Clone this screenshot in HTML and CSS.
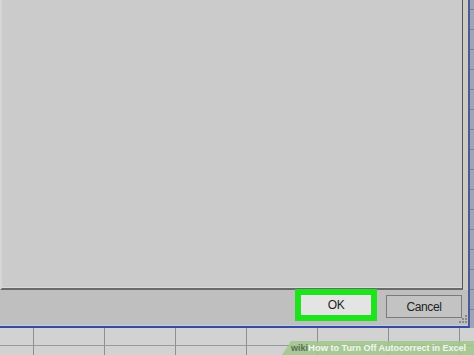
FILE: index.html
```html
<!DOCTYPE html>
<html lang="en">
<head>
    <meta charset="UTF-8">
    <meta name="viewport" content="width=device-width, initial-scale=1.0">
    <title>How to Turn Off Autocorrect in Excel</title>
    <link rel="stylesheet" href="styles.css">
</head>
<body>
    <div class="screen">
        <div class="top">
            <div class="dialog">
                <div class="panel-wrap">
                    <div class="panel"></div>
                </div>
                <div class="button-bar">
                    <div class="highlight">
                        <button class="btn btn-ok">OK</button>
                    </div>
                    <button class="btn btn-cancel">Cancel</button>
                    <svg class="grip" width="8" height="8" viewBox="0 0 8 8">
                        <rect x="6" y="0" width="2" height="2" fill="#8a8a8a"/>
                        <rect x="3" y="3" width="2" height="2" fill="#8a8a8a"/>
                        <rect x="6" y="3" width="2" height="2" fill="#8a8a8a"/>
                        <rect x="0" y="6" width="2" height="2" fill="#8a8a8a"/>
                        <rect x="3" y="6" width="2" height="2" fill="#8a8a8a"/>
                        <rect x="6" y="6" width="2" height="2" fill="#8a8a8a"/>
                    </svg>
                </div>
            </div>
            <div class="sheet-edge"></div>
        </div>
        <div class="grid">
            <div class="row">
                <div class="cell first"></div>
                <div class="cell"></div>
                <div class="cell"></div>
                <div class="cell"></div>
                <div class="cell"></div>
                <div class="cell"></div>
                <div class="cell"></div>
            </div>
            <div class="row">
                <div class="cell first"></div>
                <div class="cell"></div>
                <div class="cell"></div>
                <div class="cell"></div>
                <div class="cell"></div>
                <div class="cell"></div>
                <div class="cell"></div>
            </div>
        </div>
        <div class="watermark">
            <span class="wiki">wiki</span><span class="how">How</span> to Turn Off Autocorrect in Excel
        </div>
    </div>
</body>
</html>
```

FILE: styles.css
```css
body {
    margin: 0;
    font-family: "Liberation Sans", Arial, sans-serif;
    background-color: #d2d2d2;
}
.screen {
    position: relative;
    width: 474px;
    height: 355px;
    overflow: hidden;
}
.top {
    display: flex;
}
.dialog {
    position: relative;
    width: 468px;
    background-color: #bfbfbf;
    border-right: 2px solid #4b5a98;
    border-bottom: 2px solid #3a4aa0;
    box-shadow: inset 0 -1px 0 #b6d2e2;
}
.panel-wrap {
    padding-right: 5px;
    background-color: #cdcac2;
}
.panel {
    height: 288px;
    background-color: #cbcbcb;
    border-left: 2px solid #d6d6d6;
    border-right: 1px solid #555;
    border-bottom: 2px solid #6a6a6a;
    box-shadow: inset 0 -1px 0 #dadada;
}
.button-bar {
    display: flex;
    justify-content: flex-end;
    align-items: flex-start;
    gap: 9px;
    height: 36px;
    padding-right: 6px;
}
.highlight {
    margin-top: -1px;
    border: 6px solid #1ee41e;
    width: 70px;
    height: 20px;
}
.btn {
    font-family: "Liberation Sans", Arial, sans-serif;
    font-size: 12px;
    letter-spacing: -0.4px;
    color: #1e1e1e;
    padding: 0;
    cursor: pointer;
}
.btn-ok {
    display: block;
    width: 100%;
    height: 100%;
    border: none;
    background-color: #e4e4e4;
}
.btn-cancel {
    margin-top: 5px;
    width: 76px;
    height: 23px;
    border: 1px solid #7a7a7a;
    background-color: #c3c3c3;
}
.grip {
    position: absolute;
    right: 1px;
    bottom: 3px;
}
.sheet-edge {
    width: 4px;
    background-color: #9fa5b6;
    background-image: repeating-linear-gradient(to bottom, transparent 0, transparent 9px, #7c8296 9px, #7c8296 10px, transparent 10px, transparent 20px);
}
.grid {
    display: flex;
    flex-direction: column;
}
.row {
    display: flex;
    height: 17px;
    border-bottom: 1px solid #9a9a9a;
}
.cell {
    width: 70px;
    flex-shrink: 0;
    border-right: 1px solid #8f8f8f;
}
.cell.first {
    width: 33px;
}
.watermark {
    position: absolute;
    right: 0;
    bottom: 0;
    width: 183px;
    height: 14px;
    padding-left: 9px;
    background-color: rgba(160, 200, 140, 0.85);
    clip-path: polygon(9px 0, 100% 0, 100% 100%, 0 100%);
    font-size: 9px;
    font-weight: bold;
    line-height: 14px;
    color: #f2f6ee;
    white-space: nowrap;
}
.wiki {
    color: #5e6b52;
}
.how {
    font-size: 9.5px;
}
```
